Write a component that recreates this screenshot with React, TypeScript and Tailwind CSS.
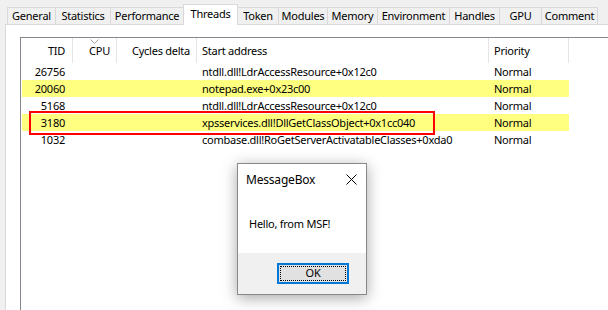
const tabs = [
  { label: 'General', w: 'w-[49px]' },
  { label: 'Statistics', w: 'w-[55px]' },
  { label: 'Performance', w: 'w-[73px]' },
  { label: 'Threads', w: 'w-[55px]', active: true },
  { label: 'Token', w: 'w-[41px]' },
  { label: 'Modules', w: 'w-[49px]' },
  { label: 'Memory', w: 'w-[50px]' },
  { label: 'Environment', w: 'w-[72px]' },
  { label: 'Handles', w: 'w-[50px]' },
  { label: 'GPU', w: 'w-[42px]' },
  { label: 'Comment', w: 'w-[56px]' },
];

const threads = [
  { tid: '26756', start: 'ntdll.dll!LdrAccessResource+0x12c0', gui: false },
  { tid: '20060', start: 'notepad.exe+0x23c00', gui: true },
  { tid: '5168', start: 'ntdll.dll!LdrAccessResource+0x12c0', gui: false },
  { tid: '3180', start: 'xpsservices.dll!DllGetClassObject+0x1cc040', gui: true },
  { tid: '1032', start: 'combase.dll!RoGetServerActivatableClasses+0xda0', gui: false },
];

function SortArrow() {
  return (
    <svg width="9" height="5" viewBox="0 0 9 5" className="absolute top-[1px] left-[17px]">
      <path d="M0.5 0.5 L4.5 4.5 L8.5 0.5" fill="none" stroke="#a0a0a0" strokeWidth="1" />
    </svg>
  );
}

export default function App() {
  return (
    <div className="relative w-[608px] h-[310px] overflow-hidden bg-[#f0f0f0] text-[11px] tracking-[-0.25px] text-black font-['Noto_Sans',sans-serif] flex flex-col">
      {/* Tab strip */}
      <div className="shrink-0 flex items-end h-[25px] ml-[5px] pl-[2px] border-b border-[#d9d9d9]">
        {tabs.map((t, i) =>
          t.active ? (
            <div
              key={t.label}
              className={`${t.w} relative z-10 -ml-px -mb-px h-[21px] bg-white border-x border-t border-[#d9d9d9] flex items-center justify-center pb-[2px]`}
            >
              {t.label}
            </div>
          ) : (
            <div
              key={t.label}
              className={`${t.w} h-[17px] border-t border-r ${i === 0 ? 'border-l' : ''} border-[#d9d9d9] flex items-center justify-center pt-px`}
            >
              {t.label}
            </div>
          )
        )}
      </div>

      {/* Tab page */}
      <div className="flex-1 min-h-0 ml-[5px] border-l border-[#d9d9d9] bg-white pl-[14px] pt-[12px]">
        <div className="w-[700px] h-[400px] border border-[#828790] bg-white">
          {/* Header */}
          <div className="flex h-[25px] bg-white">
            <div className="w-[52px] border-r border-[#e5e5e5] flex items-center justify-end pr-[7px] pt-[2px]">TID</div>
            <div className="relative w-[44px] border-r border-[#e5e5e5] flex items-center justify-end pr-[6px] pt-[2px]">
              <SortArrow />
              CPU
            </div>
            <div className="w-[80px] border-r border-[#e5e5e5] flex items-center justify-end pr-[6px] pt-[2px]">Cycles delta</div>
            <div className="w-[292px] border-r border-[#e5e5e5] flex items-center pl-[5px] pt-[2px]">Start address</div>
            <div className="w-[80px] border-r border-[#e5e5e5] flex items-center pl-[5px] pt-[2px]">Priority</div>
          </div>

          {/* Rows */}
          {threads.map((r) => (
            <div key={r.tid} className={`flex h-[17px] w-[547px] ml-px items-center pt-px ${r.gui ? 'bg-[#ffff80]' : ''}`}>
              <div className="w-[51px] text-right pr-[8px]">{r.tid}</div>
              <div className="w-[44px]" />
              <div className="w-[80px]" />
              <div className="w-[292px] pl-[5px] whitespace-nowrap">{r.start}</div>
              <div className="w-[80px] pl-[5px]">Normal</div>
            </div>
          ))}
        </div>
      </div>

      {/* Highlight annotation */}
      <div className="absolute left-[29px] top-[111px] w-[406px] h-[24px] border-2 border-[#ff0000]" />

      {/* MessageBox */}
      <div className="absolute left-[237px] top-[163px] w-[130px] h-[132px] bg-white border border-[#888888] shadow-[0_3px_14px_rgba(0,0,0,0.35)] flex flex-col">
        <div className="flex items-center justify-between h-[31px] pl-[8px] pr-[9px] text-[12px] tracking-[-0.2px]">
          <span>MessageBox</span>
          <svg width="11" height="11" viewBox="0 0 11 11">
            <path d="M0.5 0.5 L10.5 10.5 M10.5 0.5 L0.5 10.5" stroke="#000" strokeWidth="1" />
          </svg>
        </div>
        <div className="flex-1 flex items-center pl-[11px] pt-px">Hello, from MSF!</div>
        <div className="h-[41px] bg-[#f0f0f0] flex justify-end items-start pt-[10px] pr-[17px]">
          <div className="w-[72px] h-[21px] border-2 border-[#0078d7] bg-[#e1e1e1] p-px">
            <div className="h-full border border-dotted border-black flex items-center justify-center">OK</div>
          </div>
        </div>
      </div>
    </div>
  );
}
